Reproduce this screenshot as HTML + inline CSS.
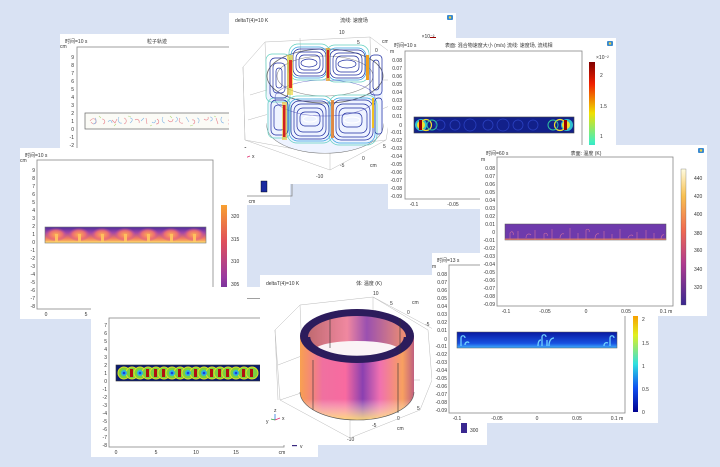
<!DOCTYPE html>
<html><head><meta charset="utf-8">
<style>
html,body{margin:0;padding:0;}
body{width:720px;height:467px;background:#d9e2f3;position:relative;overflow:hidden;font-family:"Liberation Sans","Noto Sans CJK SC",sans-serif;}
svg{position:absolute;display:block;}
text{font-family:"Liberation Sans","Noto Sans CJK SC",sans-serif;font-size:5px;fill:#333;}
.e{text-anchor:end}.m{text-anchor:middle}
.ax{fill:none;stroke:#888;stroke-width:0.8}
.g{fill:none;stroke:#bbb;stroke-width:0.5}
</style></head><body>

<svg width="720" height="467" viewBox="0 0 720 467">
<defs>
 <linearGradient id="tE" x1="0" y1="0" x2="0" y2="1"><stop offset="0" stop-color="#4a2a9a"/><stop offset="0.35" stop-color="#a046a8"/><stop offset="0.7" stop-color="#f07a60"/><stop offset="1" stop-color="#ffd060"/></linearGradient>
 <radialGradient id="mush" cx="0.5" cy="0.55" r="0.5"><stop offset="0" stop-color="#ffb050"/><stop offset="0.6" stop-color="#f07070" stop-opacity="0.9"/><stop offset="1" stop-color="#c050a0" stop-opacity="0"/></radialGradient>
 <linearGradient id="cbE" x1="0" y1="0" x2="0" y2="1"><stop offset="0" stop-color="#f8a030"/><stop offset="0.35" stop-color="#e0505a"/><stop offset="0.7" stop-color="#9a3aa0"/><stop offset="1" stop-color="#3a2890"/></linearGradient>
 <linearGradient id="cbD" x1="0" y1="0" x2="0" y2="1"><stop offset="0" stop-color="#fffce0"/><stop offset="0.2" stop-color="#f8c050"/><stop offset="0.45" stop-color="#f06a50"/><stop offset="0.7" stop-color="#b03a90"/><stop offset="1" stop-color="#3a2890"/></linearGradient>
 <linearGradient id="jet" x1="0" y1="0" x2="0" y2="1"><stop offset="0" stop-color="#800000"/><stop offset="0.15" stop-color="#f02000"/><stop offset="0.35" stop-color="#f0e000"/><stop offset="0.55" stop-color="#40f0c0"/><stop offset="0.75" stop-color="#1060f0"/><stop offset="1" stop-color="#000080"/></linearGradient>
 <linearGradient id="jetH" x1="0" y1="0" x2="0" y2="1"><stop offset="0" stop-color="#f8a000"/><stop offset="0.2" stop-color="#e0f020"/><stop offset="0.5" stop-color="#30e0e0"/><stop offset="0.75" stop-color="#1050f0"/><stop offset="1" stop-color="#000090"/></linearGradient>
 <linearGradient id="stH" x1="0" y1="0" x2="0" y2="1"><stop offset="0" stop-color="#0818a0"/><stop offset="0.7" stop-color="#1850e0"/><stop offset="1" stop-color="#40b0ff"/></linearGradient>
 <linearGradient id="cyl" x1="0" y1="0" x2="1" y2="0"><stop offset="0" stop-color="#f8a050"/><stop offset="0.2" stop-color="#f070a0"/><stop offset="0.4" stop-color="#f86aa0"/><stop offset="0.55" stop-color="#8a40b0"/><stop offset="0.7" stop-color="#f070b0"/><stop offset="0.9" stop-color="#f8a060"/><stop offset="1" stop-color="#c06080"/></linearGradient>
 <linearGradient id="cylv" x1="0" y1="0" x2="0" y2="1"><stop offset="0.75" stop-color="#fff" stop-opacity="0"/><stop offset="1" stop-color="#ffe070" stop-opacity="0.9"/></linearGradient>
 <linearGradient id="inner" x1="0" y1="0" x2="1" y2="0"><stop offset="0" stop-color="#c06a70"/><stop offset="0.4" stop-color="#f088a0"/><stop offset="0.6" stop-color="#9a50b0"/><stop offset="1" stop-color="#f09070"/></linearGradient>
</defs>

<!-- Panel A -->
<rect x="60" y="34" width="230" height="171" fill="#fff"/>
<text x="65" y="43">时间=10 s</text><text x="157" y="43" class="m">粒子轨迹</text>
<text x="60" y="48">cm</text>
<rect x="77" y="47" width="215" height="149" class="ax"/>
<g class="e">
<text x="74" y="59">9</text><text x="74" y="67">8</text><text x="74" y="75">7</text><text x="74" y="83">6</text><text x="74" y="91">5</text><text x="74" y="99">4</text><text x="74" y="107">3</text><text x="74" y="115">2</text><text x="74" y="123">1</text><text x="74" y="131">0</text><text x="74" y="139">-1</text><text x="74" y="147">-2</text><text x="74" y="155">-3</text><text x="74" y="163">-4</text><text x="74" y="171">-5</text><text x="74" y="179">-6</text><text x="74" y="187">-7</text><text x="74" y="195">-8</text>
</g>
<text x="85" y="203" class="m">0</text><text x="125" y="203" class="m">5</text><text x="165" y="203" class="m">10</text><text x="205" y="203" class="m">15</text><text x="252" y="203" class="m">cm</text>
<rect x="85" y="113" width="205" height="16" fill="#fbfbf6" stroke="#666" stroke-width="0.7"/>
<g fill="none" stroke-width="0.6" opacity="0.8">
<path d="M90 121c2-3 5-3 6 0s-3 4-5 1M102 119c3 0 4 4 1 5M112 120l3 3 2-4M124 118c3 1 3 5 0 6M135 120c2-2 5 0 4 3M146 118l1 6M157 119c3 2 2 5-1 5M168 120c2 3 5 2 5-1M180 118c-2 3 0 6 3 5M192 120c3-1 4 3 1 4M204 119c2 2 5 1 4-2M216 118l2 6M228 120c3 0 3 4 0 4M240 119c2 3 4 2 5 0M252 118c3 2 2 6-1 5M264 121c2-3 5-2 5 1M276 119l2 5" stroke="#e06070"/>
<path d="M95 118c2 2 1 6-2 6M108 122c2-3 4-1 4 1M119 117c-2 3 0 7 3 6M130 123c3-2 3-5 0-5M141 121l3-3M152 122c2 2 4 0 3-2M163 117c-2 3 0 6 2 6M175 122c3-1 3-4 1-5M186 117l3 5M198 123c2-2 1-5-1-5M210 121c3 0 3-4 0-4M222 117c-2 2-1 6 2 6M234 123c3-2 3-4 0-5M246 121c3 1 4-2 2-4M258 117c-2 3 0 6 3 6M270 122c2-2 3-4 0-5M282 117l-2 5" stroke="#60a0e0"/>
<path d="M99 116l2 2M114 126l2-2M128 116l3 1M150 126l2-1M170 116l2 2M190 126l3-1M214 116l2 1M236 126l2-2M256 116l3 2M278 126l2-1" stroke="#a0d060"/>
</g>

<!-- Panel B (3D streamlines) -->
<rect x="229" y="13" width="227" height="171" fill="#fff"/>
<text x="235" y="22">deltaT(4)=10 K</text><text x="354" y="22" class="m">流线: 速度场</text>
<rect x="447" y="15" width="6" height="5" rx="1" fill="#3a8ad0"/><circle cx="450" cy="17.5" r="1.2" fill="#f0d040"/>
<text x="428" y="38" class="m">×10⁻²</text><rect x="430" y="37" width="6" height="1.3" fill="#900"/>
<text x="339" y="34">10</text><text x="357" y="44">5</text><text x="382" y="43">cm</text><text x="375" y="52">0</text>
<text x="383" y="148">5</text><text x="362" y="160">0</text><text x="340" y="167">-5</text><text x="370" y="167">cm</text><text x="316" y="178">-10</text>
<g class="g">
<path d="M243 67L265 42L370 37L390 52L392 105L386 140L330 170L245 140Z"/>
<path d="M243 67L245 140M265 42L268 118M370 37L372 110M330 88L330 170M250 95L300 80L390 80M248 120L300 105"/>
<path d="M245 140L300 150L386 140M268 118L330 130L392 105M300 38L302 110"/>
</g>
<ellipse cx="325" cy="126" rx="58" ry="27" fill="none" stroke="#666" stroke-width="0.8"/>
<path d="M267 76L267 126A58 27 0 0 0 383 126L383 76Z" fill="#eef3ff"/>
<ellipse cx="325" cy="76" rx="58" ry="27" fill="#fff" stroke="#666" stroke-width="0.8"/>
<ellipse cx="325" cy="76" rx="48" ry="20" fill="#fff" stroke="#888" stroke-width="0.6"/>
<ellipse cx="325" cy="98" rx="50" ry="18" fill="none" stroke="#77c" stroke-width="0.6"/>
<g fill="none" stroke-width="0.7">
<g stroke="#60d0c0"><rect x="289" y="44" width="41" height="36" rx="9"/><rect x="326" y="45" width="43" height="37" rx="9"/><rect x="266" y="54" width="24" height="48" rx="6"/><rect x="287" y="96" width="46" height="47" rx="10"/><rect x="329" y="95" width="48" height="50" rx="10"/><rect x="268" y="98" width="22" height="40" rx="6"/></g>
<g stroke="#30a0e0"><rect x="291" y="47" width="36" height="31" rx="8"/><rect x="328" y="48" width="38" height="32" rx="8"/><rect x="289" y="99" width="42" height="42" rx="9"/><rect x="331" y="98" width="44" height="45" rx="9"/></g>
<g stroke="#1a2aa0"><rect x="293" y="49" width="33" height="27" rx="7"/><rect x="296" y="52" width="27" height="21" rx="6"/><rect x="299" y="55" width="21" height="15" rx="5"/><ellipse cx="309" cy="63" rx="8" ry="4"/><rect x="330" y="50" width="35" height="28" rx="7"/><rect x="333" y="53" width="29" height="22" rx="6"/><rect x="336" y="56" width="23" height="16" rx="5"/><ellipse cx="347" cy="64" rx="9" ry="4"/><rect x="270" y="58" width="18" height="40" rx="5"/><rect x="273" y="63" width="12" height="30" rx="4"/><rect x="276" y="68" width="6" height="20" rx="3"/><rect x="370" y="55" width="12" height="40" rx="4"/><rect x="373" y="60" width="6" height="30" rx="3"/></g>
<g stroke="#1a2aa0"><rect x="291" y="101" width="38" height="38" rx="8"/><rect x="294" y="104" width="32" height="32" rx="7"/><rect x="297" y="108" width="26" height="24" rx="6"/><rect x="300" y="112" width="20" height="14" rx="5"/><rect x="333" y="100" width="40" height="40" rx="8"/><rect x="336" y="104" width="34" height="33" rx="7"/><rect x="339" y="108" width="28" height="25" rx="6"/><rect x="342" y="113" width="20" height="14" rx="5"/><rect x="271" y="100" width="17" height="35" rx="5"/><rect x="274" y="105" width="11" height="25" rx="4"/><rect x="375" y="98" width="7" height="36" rx="3"/></g>
<g stroke="#fff" stroke-width="1"><ellipse cx="310" cy="119" rx="7" ry="3"/><ellipse cx="352" cy="120" rx="8" ry="3"/><ellipse cx="309" cy="63" rx="5" ry="2.5"/><ellipse cx="347" cy="64" rx="6" ry="2.5"/></g>
</g>
<rect x="287" y="55" width="6" height="40" fill="#f0d020" opacity="0.6"/><rect x="289" y="60" width="3" height="28" fill="#e03020"/>
<rect x="326" y="48" width="4" height="33" fill="#f0a020" opacity="0.7"/><rect x="327" y="50" width="2" height="28" fill="#d02020"/><rect x="366" y="55" width="3" height="25" fill="#f0a020"/>
<rect x="282" y="102" width="5" height="38" fill="#f0c020" opacity="0.6"/><rect x="283" y="105" width="2.5" height="32" fill="#d02020"/><rect x="331" y="100" width="3" height="38" fill="#f08020" opacity="0.8"/><rect x="372" y="98" width="2" height="30" fill="#f0c020"/>
<path d="M245 158v-6" stroke="#2a7ae0" stroke-width="0.8"/><path d="M245 158l5-2" stroke="#e03070" stroke-width="0.8"/><path d="M245 158l-4-1" stroke="#30a040" stroke-width="0.8"/>
<text x="244" y="150">z</text><text x="236" y="161">y</text><text x="252" y="158">x</text>
<rect x="261" y="181" width="6" height="11" fill="#1a2aa0" stroke="#000" stroke-width="0.4"/>

<!-- Panel C -->
<rect x="388" y="38" width="228" height="171" fill="#fff"/>
<text x="394" y="47">时间=10 s</text><text x="445" y="47">表面: 混合物速度大小 (m/s)  流线: 速度场, 流线相</text>
<rect x="607" y="41" width="6" height="5" rx="1" fill="#3a8ad0"/><circle cx="610" cy="43.5" r="1.2" fill="#f0d040"/>
<text x="390" y="53">m</text>
<rect x="405" y="51" width="177" height="148" class="ax"/>
<g class="e">
<text x="402" y="62">0.08</text><text x="402" y="70">0.07</text><text x="402" y="78">0.06</text><text x="402" y="86">0.05</text><text x="402" y="94">0.04</text><text x="402" y="102">0.03</text><text x="402" y="110">0.02</text><text x="402" y="118">0.01</text><text x="402" y="127">0</text><text x="402" y="134">-0.01</text><text x="402" y="142">-0.02</text><text x="402" y="150">-0.03</text><text x="402" y="158">-0.04</text><text x="402" y="166">-0.05</text><text x="402" y="174">-0.06</text><text x="402" y="182">-0.07</text><text x="402" y="190">-0.08</text><text x="402" y="198">-0.09</text>
</g>
<text x="414" y="206" class="m">-0.1</text><text x="453" y="206" class="m">-0.05</text>
<rect x="414" y="117" width="160" height="16" fill="#12208a" stroke="#444" stroke-width="0.6"/>
<g fill="none" stroke="#2a40c0" stroke-width="0.8"><circle cx="440" cy="125" r="5"/><circle cx="455" cy="125" r="5"/><circle cx="470" cy="125" r="6"/><circle cx="488" cy="125" r="5"/><circle cx="503" cy="125" r="6"/><circle cx="518" cy="125" r="5"/><circle cx="533" cy="125" r="5"/></g>
<circle cx="421" cy="125" r="6" fill="#30c0d0"/><circle cx="421" cy="125" r="4" fill="#f0e030"/><circle cx="426" cy="125" r="5.5" fill="none" stroke="#f0e030" stroke-width="1.2"/><circle cx="432" cy="125" r="5" fill="none" stroke="#30c0a0" stroke-width="1"/><rect x="419" y="120" width="3" height="10" fill="#900"/>
<circle cx="567" cy="125" r="6" fill="#30c0d0"/><circle cx="566" cy="125" r="4" fill="#f0e030"/><circle cx="560" cy="125" r="5.5" fill="none" stroke="#f0e030" stroke-width="1.2"/><circle cx="553" cy="125" r="5" fill="none" stroke="#30c0a0" stroke-width="1"/><rect x="564" y="120" width="3" height="10" fill="#900"/>
<rect x="589" y="62" width="6" height="146" fill="url(#jet)"/>
<text x="596" y="59">×10⁻²</text><text x="600" y="77">2</text><text x="600" y="108">1.5</text><text x="600" y="138">1</text>

<!-- Panel E -->
<rect x="20" y="148" width="227" height="171" fill="#fff"/>
<text x="25" y="157">时间=10 s</text><text x="20" y="162">cm</text>
<rect x="37" y="160" width="176" height="149" class="ax"/>
<g class="e">
<text x="35" y="172">9</text><text x="35" y="180">8</text><text x="35" y="188">7</text><text x="35" y="196">6</text><text x="35" y="204">5</text><text x="35" y="212">4</text><text x="35" y="220">3</text><text x="35" y="228">2</text><text x="35" y="236">1</text><text x="35" y="244">0</text><text x="35" y="252">-1</text><text x="35" y="260">-2</text><text x="35" y="268">-3</text><text x="35" y="276">-4</text><text x="35" y="284">-5</text><text x="35" y="292">-6</text><text x="35" y="300">-7</text><text x="35" y="308">-8</text>
</g>
<text x="46" y="316" class="m">0</text><text x="86" y="316" class="m">5</text><text x="126" y="316" class="m">10</text><text x="166" y="316" class="m">15</text><text x="212" y="316" class="m">cm</text>
<rect x="45" y="227" width="161" height="16" fill="url(#tE)"/>
<g fill="url(#mush)">
<ellipse cx="56" cy="234" rx="11" ry="7"/><ellipse cx="79" cy="234" rx="11" ry="7"/><ellipse cx="102" cy="234" rx="11" ry="7"/><ellipse cx="125" cy="234" rx="11" ry="7"/><ellipse cx="148" cy="234" rx="11" ry="7"/><ellipse cx="171" cy="234" rx="11" ry="7"/><ellipse cx="194" cy="234" rx="11" ry="7"/>
</g>
<g fill="#ffc060"><rect x="55" y="234" width="3" height="9"/><rect x="78" y="234" width="3" height="9"/><rect x="101" y="234" width="3" height="9"/><rect x="124" y="234" width="3" height="9"/><rect x="147" y="234" width="3" height="9"/><rect x="170" y="234" width="3" height="9"/><rect x="193" y="234" width="3" height="9"/></g>
<rect x="45" y="241.5" width="161" height="1.5" fill="#ffd870"/>
<rect x="45" y="227" width="161" height="16" fill="none" stroke="#777" stroke-width="0.6"/>
<rect x="221" y="205" width="6" height="103" fill="url(#cbE)"/>
<text x="231" y="218">320</text><text x="231" y="241">315</text><text x="231" y="263">310</text><text x="231" y="286">305</text>

<!-- Panel F -->
<rect x="91" y="287" width="227" height="170" fill="#fff"/>
<rect x="109" y="318" width="175" height="129" class="ax"/>
<g class="e">
<text x="107" y="327">7</text><text x="107" y="335">6</text><text x="107" y="343">5</text><text x="107" y="351">4</text><text x="107" y="359">3</text><text x="107" y="367">2</text><text x="107" y="375">1</text><text x="107" y="383">0</text><text x="107" y="391">-1</text><text x="107" y="399">-2</text><text x="107" y="407">-3</text><text x="107" y="415">-4</text><text x="107" y="423">-5</text><text x="107" y="431">-6</text><text x="107" y="439">-7</text><text x="107" y="447">-8</text>
</g>
<text x="116" y="454" class="m">0</text><text x="156" y="454" class="m">5</text><text x="196" y="454" class="m">10</text><text x="236" y="454" class="m">15</text><text x="282" y="454" class="m">cm</text>
<rect x="116" y="365" width="144" height="16" fill="#0a1a70"/>
<g fill="#7ad040" stroke="#e0e020" stroke-width="1">
<circle cx="124" cy="373" r="6"/><circle cx="132" cy="373" r="6"/><circle cx="140" cy="373" r="6"/><circle cx="148" cy="373" r="6"/><circle cx="156" cy="373" r="6"/><circle cx="164" cy="373" r="6"/><circle cx="172" cy="373" r="6"/><circle cx="180" cy="373" r="6"/><circle cx="188" cy="373" r="6"/><circle cx="196" cy="373" r="6"/><circle cx="204" cy="373" r="6"/><circle cx="212" cy="373" r="6"/><circle cx="220" cy="373" r="6"/><circle cx="228" cy="373" r="6"/><circle cx="236" cy="373" r="6"/><circle cx="244" cy="373" r="6"/><circle cx="252" cy="373" r="6"/>
</g>
<g fill="#30b0e0"><circle cx="124" cy="373" r="3"/><circle cx="140" cy="373" r="3"/><circle cx="172" cy="373" r="3"/><circle cx="188" cy="373" r="3"/><circle cx="204" cy="373" r="3"/><circle cx="236" cy="373" r="3"/></g>
<g fill="#b01010"><rect x="130" y="369" width="3" height="8"/><rect x="146" y="369" width="3" height="8"/><rect x="154" y="369" width="3" height="8"/><rect x="162" y="369" width="3" height="8"/><rect x="178" y="369" width="3" height="8"/><rect x="194" y="369" width="3" height="8"/><rect x="210" y="369" width="3" height="8"/><rect x="218" y="369" width="3" height="8"/><rect x="226" y="369" width="3" height="8"/><rect x="242" y="369" width="3" height="8"/><rect x="250" y="369" width="3" height="8"/></g>
<g fill="#1840e0"><circle cx="124" cy="373" r="1.3"/><circle cx="140" cy="373" r="1.3"/><circle cx="172" cy="373" r="1.3"/><circle cx="188" cy="373" r="1.3"/><circle cx="204" cy="373" r="1.3"/><circle cx="236" cy="373" r="1.3"/></g>
<rect x="116" y="365" width="144" height="16" fill="none" stroke="#333" stroke-width="0.6"/>
<rect x="247" y="298" width="13" height="0.8" fill="#888"/>
<rect x="292" y="445" width="5" height="1.2" fill="#3a2a80"/><text x="300" y="448">v</text>

<!-- Panel G (3D temp cylinder) -->
<rect x="260" y="275" width="227" height="170" fill="#fff"/>
<text x="266" y="285">deltaT(4)=10 K</text><text x="369" y="285" class="m">体: 温度 (K)</text>
<text x="373" y="295">10</text><text x="390" y="305">5</text><text x="412" y="304">cm</text><text x="407" y="314">0</text><text x="425" y="326">-5</text>
<text x="417" y="410">5</text><text x="397" y="420">0</text><text x="372" y="427">-5</text><text x="397" y="430">cm</text><text x="347" y="441">-10</text>
<g class="g">
<path d="M275 330L300 305L373 297L428 330L432 380L420 410L350 438L280 400Z"/>
<path d="M275 330L278 400M300 305L303 375M373 297L373 370M350 365L350 438M278 365L330 345M280 400L340 380L420 380M373 297L435 330"/>
</g>
<rect x="461" y="423" width="6" height="10" fill="#3a2890"/><text x="470" y="432">300</text>
<path d="M300 336L300 392A57 28 0 0 0 414 392L414 336Z" fill="url(#cyl)"/>
<path d="M300 336L300 392A57 28 0 0 0 414 392L414 336Z" fill="url(#cylv)"/>
<path d="M300 392A57 28 0 0 0 414 392" fill="none" stroke="#555" stroke-width="0.6"/>
<ellipse cx="357" cy="336" rx="57" ry="27" fill="#2c1c5c"/>
<ellipse cx="357" cy="337" rx="49" ry="21" fill="url(#inner)"/>
<path d="M315 350A44 12 0 0 0 399 350A42 9 0 0 0 315 350Z" fill="#fbf3f6"/>
<path d="M308 337A49 21 0 0 0 406 337" fill="none" stroke="#2c1c5c" stroke-width="4.5"/>
<g stroke="#333" stroke-width="0.6"><path d="M313 360v50M398 363v50M330 318v30M400 318v35"/></g>
<path d="M275 420v-6" stroke="#2a7ae0" stroke-width="0.8"/><path d="M275 420l5-2" stroke="#e03070" stroke-width="0.8"/><path d="M275 420l-4-1" stroke="#30a040" stroke-width="0.8"/>
<text x="274" y="412">z</text><text x="266" y="423">y</text><text x="282" y="420">x</text>

<!-- Panel H -->
<rect x="432" y="253" width="226" height="170" fill="#fff"/>
<text x="437" y="262">时间=13 s</text><text x="432" y="268">m</text>
<rect x="449" y="265" width="176" height="148" class="ax"/>
<g class="e">
<text x="447" y="276">0.08</text><text x="447" y="284">0.07</text><text x="447" y="292">0.06</text><text x="447" y="300">0.05</text><text x="447" y="308">0.04</text><text x="447" y="316">0.03</text><text x="447" y="324">0.02</text><text x="447" y="332">0.01</text><text x="447" y="341">0</text><text x="447" y="348">-0.01</text><text x="447" y="356">-0.02</text><text x="447" y="364">-0.03</text><text x="447" y="372">-0.04</text><text x="447" y="380">-0.05</text><text x="447" y="388">-0.06</text><text x="447" y="396">-0.07</text><text x="447" y="404">-0.08</text><text x="447" y="412">-0.09</text>
</g>
<text x="457" y="420" class="m">-0.1</text><text x="497" y="420" class="m">-0.05</text><text x="537" y="420" class="m">0</text><text x="577" y="420" class="m">0.05</text><text x="617" y="420" class="m">0.1 m</text>
<rect x="457" y="332" width="160" height="16" fill="url(#stH)" stroke="#555" stroke-width="0.5"/>
<g fill="none" stroke="#70d0ff" stroke-width="1.3">
<path d="M461 346v-8c0-3 4-3 4 0M465 345c0-3 3-4 4-2M542 346v-9c0-3 4-3 4 0M547 346v-6M549 346c0-5 2-8 5-8M538 346c0-4 1-6 3-6M610 346v-8c0-3 4-3 4 0M604 346c0-3 2-4 4-3"/>
</g>
<rect x="633" y="316" width="5" height="96" fill="url(#jetH)"/>
<text x="642" y="321">2</text><text x="642" y="345">1.5</text><text x="642" y="368">1</text><text x="642" y="391">0.5</text><text x="642" y="414">0</text>

<!-- Panel D -->
<rect x="480" y="145" width="227" height="171" fill="#fff"/>
<text x="486" y="155">时间=60 s</text><text x="586" y="155" class="m">表面: 温度 (K)</text>
<rect x="698" y="148" width="6" height="5" rx="1" fill="#3a8ad0"/><circle cx="701" cy="150.5" r="1.2" fill="#f0d040"/>
<text x="481" y="161">m</text>
<rect x="497" y="157" width="176" height="149" class="ax"/>
<g class="e">
<text x="495" y="170">0.08</text><text x="495" y="178">0.07</text><text x="495" y="186">0.06</text><text x="495" y="194">0.05</text><text x="495" y="202">0.04</text><text x="495" y="210">0.03</text><text x="495" y="218">0.02</text><text x="495" y="226">0.01</text><text x="495" y="234">0</text><text x="495" y="242">-0.01</text><text x="495" y="250">-0.02</text><text x="495" y="258">-0.03</text><text x="495" y="266">-0.04</text><text x="495" y="274">-0.05</text><text x="495" y="282">-0.06</text><text x="495" y="290">-0.07</text><text x="495" y="298">-0.08</text><text x="495" y="306">-0.09</text>
</g>
<text x="506" y="313" class="m">-0.1</text><text x="545" y="313" class="m">-0.05</text><text x="586" y="313" class="m">0</text><text x="626" y="313" class="m">0.05</text><text x="666" y="313" class="m">0.1 m</text>
<rect x="505" y="224" width="161" height="16" fill="#6e3aac" stroke="#555" stroke-width="0.5"/>
<g fill="none" stroke="#d070a0" stroke-width="0.6">
<path d="M510 240v-7c2-3 4 0 3 2M518 240v-9M526 238c0-4 3-5 5-3M535 240v-10M544 240v-6c2-2 4 0 3 2M552 240v-11M560 238c0-3 2-5 4-4M570 240v-12M578 240v-7M586 240v-10c2-2 4 0 3 2M595 239c0-4 2-6 4-5M604 240v-9M612 240v-6M620 240v-11M628 238c1-3 4-4 5-2M637 240v-8M646 240v-10M654 240v-7M661 239c0-3 2-5 3-4"/>
</g>
<rect x="505" y="238.5" width="161" height="1.5" fill="#e08060" opacity="0.8"/>
<rect x="681" y="169" width="5" height="136" fill="url(#cbD)" stroke="#555" stroke-width="0.3"/>
<text x="694" y="180">440</text><text x="694" y="198">420</text><text x="694" y="216">400</text><text x="694" y="235">380</text><text x="694" y="252">360</text><text x="694" y="271">340</text><text x="694" y="289">320</text>
</svg>
</body></html>
